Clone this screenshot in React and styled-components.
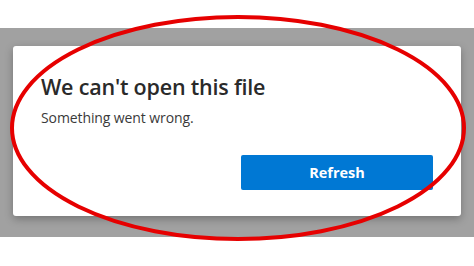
import React from 'react';
import styled, { createGlobalStyle } from "styled-components";

const GlobalStyle = createGlobalStyle`
  html, body {
    margin: 0;
    padding: 0;
    background: #ffffff;
  }
  body {
    font-family: "Open Sans", "Noto Sans", sans-serif;
  }
`;

const Page = styled.div`
  position: relative;
  width: 474px;
  height: 266px;
  padding-top: 28px;
  box-sizing: border-box;
  overflow: hidden;
`;

const Backdrop = styled.div`
  background: #a1a1a1;
  height: 209px;
  padding: 18px 13px 21px;
  box-sizing: border-box;
`;

const Card = styled.div`
  background: #ffffff;
  height: 170px;
  border-radius: 3px;
  box-shadow: 0 3px 9px rgba(0, 0, 0, 0.28);
  padding: 28px 28px 26px;
  box-sizing: border-box;
  display: flex;
  flex-direction: column;
`;

const Title = styled.h2`
  margin: 0;
  font-size: 21.5px;
  line-height: 26px;
  font-weight: 600;
  color: #2a2a2a;
  letter-spacing: -0.2px;
`;

const Message = styled.p`
  margin: 9px 0 0;
  font-size: 14px;
  line-height: 18px;
  color: #3a3a3a;
  letter-spacing: -0.1px;
`;

const Footer = styled.div`
  margin-top: auto;
  display: flex;
  justify-content: flex-end;
`;

const Button = styled.button`
  width: 192px;
  height: 35px;
  border: none;
  border-radius: 2px;
  background: #0078d4;
  color: #ffffff;
  font-family: "Open Sans", "Noto Sans", sans-serif;
  font-size: 14.5px;
  font-weight: 700;
  cursor: pointer;
`;

const Annotation = styled.svg`
  position: absolute;
  left: 0;
  top: 0;
  pointer-events: none;
`;

const App = () => {
    return (
        <Page>
            <GlobalStyle/>
            <Backdrop>
                <Card>
                    <Title>We can't open this file</Title>
                    <Message>Something went wrong.</Message>
                    <Footer>
                        <Button>Refresh</Button>
                    </Footer>
                </Card>
            </Backdrop>
            <Annotation width="474" height="266" viewBox="0 0 474 266">
                <ellipse cx="238" cy="128" rx="226" ry="111" fill="none" stroke="#e60000" strokeWidth="4"/>
            </Annotation>
        </Page>
    );
};

export default App;
